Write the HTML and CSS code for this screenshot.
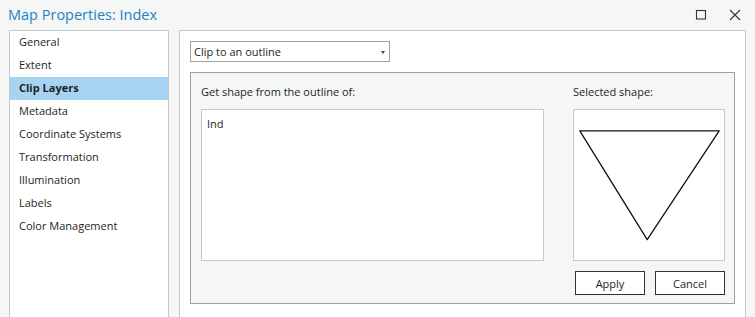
FILE: index.html
```html
<!DOCTYPE html>
<html>
<head>
    <title>Map Properties: Index</title>
    <link rel="stylesheet" href="styles.css">
</head>
<body>
    <div class="titlebar">
        <div class="title">Map Properties: Index</div>
        <div class="controls">
            <svg class="ctl" width="12" height="12" viewBox="0 0 12 12"><rect x="1.5" y="1.5" width="9" height="8.5" fill="none" stroke="#333" stroke-width="1.1"/></svg>
            <svg class="ctl" width="12" height="12" viewBox="0 0 12 12"><path d="M1 1 L11 11 M11 1 L1 11" stroke="#333" stroke-width="1.1"/></svg>
        </div>
    </div>
    <div class="main">
        <div class="sidebar">
            <div class="item">General</div>
            <div class="item">Extent</div>
            <div class="item active">Clip Layers</div>
            <div class="item">Metadata</div>
            <div class="item">Coordinate Systems</div>
            <div class="item">Transformation</div>
            <div class="item">Illumination</div>
            <div class="item">Labels</div>
            <div class="item">Color Management</div>
        </div>
        <div class="content">
            <div class="select">
                <span>Clip to an outline</span>
                <span class="arrow"></span>
            </div>
            <div class="group">
                <div class="col-left">
                    <div class="label">Get shape from the outline of:</div>
                    <div class="list">
                        <div class="list-item">Ind</div>
                    </div>
                </div>
                <div class="col-right">
                    <div class="label">Selected shape:</div>
                    <div class="shape">
                        <svg width="150" height="150" viewBox="0 0 150 150">
                            <polygon points="5.8,20.8 145.2,20.8 73.2,129.6" fill="none" stroke="#111" stroke-width="1.3" stroke-linejoin="round"/>
                        </svg>
                    </div>
                    <div class="buttons">
                        <button class="btn">Apply</button>
                        <button class="btn">Cancel</button>
                    </div>
                </div>
            </div>
        </div>
    </div>
</body>
</html>
```

FILE: styles.css
```css
body {
    margin: 0;
    background-color: #f5f6f6;
    font-family: "Open Sans", "Noto Sans", sans-serif;
    font-size: 11px;
    color: #1e1e1e;
    overflow: hidden;
    height: 317px;
}

.titlebar {
    display: flex;
    align-items: center;
    height: 30px;
    padding-left: 8px;
}

.title {
    font-size: 14.5px;
    color: #1f82c6;
    margin-top: -1px;
}

.controls {
    margin-left: auto;
    display: flex;
    gap: 22px;
    padding-right: 14px;
    margin-top: -1px;
}

.main {
    display: flex;
    gap: 10px;
    padding-left: 9px;
    height: 287px;
}

.sidebar {
    width: 158px;
    background-color: #fff;
    border: 1px solid #c8c8c8;
    border-bottom: none;
}

.item {
    height: 23px;
    line-height: 22px;
    padding-left: 9px;
}

.item.active {
    background-color: #a6d4f2;
    font-weight: bold;
}

.content {
    width: 545px;
    background-color: #fff;
    border: 1px solid #c8c8c8;
    border-bottom: none;
    padding: 10px 10px 0 10px;
}

.select {
    width: 195px;
    height: 19px;
    border: 1px solid #a0a0a0;
    display: flex;
    align-items: center;
    padding-left: 3px;
}

.arrow {
    margin-left: auto;
    margin-right: 4px;
    width: 0;
    height: 0;
    border-left: 2.5px solid transparent;
    border-right: 2.5px solid transparent;
    border-top: 3px solid #444;
    margin-top: 1px;
}

.group {
    margin-top: 10px;
    width: 524px;
    background-color: #f5f6f6;
    border: 1px solid #a0a0a0;
    padding: 10px 9px 8px 10px;
    display: flex;
    gap: 29px;
}

.label {
    height: 26px;
    line-height: 18px;
}

.list {
    width: 341px;
    height: 150px;
    background-color: #fff;
    border: 1px solid #c8c8c8;
}

.list-item {
    padding: 6px 0 0 5px;
}

.col-right {
    width: 152px;
}

.shape {
    width: 150px;
    height: 150px;
    background-color: #fff;
    border: 1px solid #c8c8c8;
}

.shape svg {
    display: block;
}

.buttons {
    display: flex;
    justify-content: flex-end;
    gap: 10px;
    margin-top: 10px;
}

.btn {
    width: 70px;
    height: 24px;
    background-color: #fff;
    border: 1px solid #333;
    font-family: inherit;
    font-size: 11px;
    color: #1e1e1e;
    padding: 0;
}
```
